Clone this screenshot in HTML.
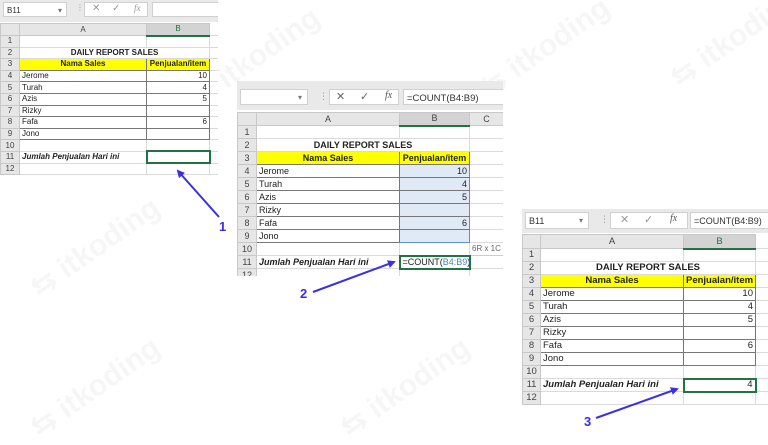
<!DOCTYPE html>
<html><head><meta charset="utf-8"><style>
*{margin:0;padding:0;box-sizing:border-box}
body{width:768px;height:432px;background:#fff;position:relative;overflow:hidden;font-family:"Liberation Sans","DejaVu Sans",sans-serif;color:#222}
.p{position:absolute;background:#fff;overflow:hidden}
.fb{position:absolute;left:0;right:0;top:0;background:#e9e9e9}
.nb,.fx{position:absolute;background:#fff;border:1px solid #d0d0d0;color:#333;white-space:nowrap}
.ic{position:absolute;color:#999}
table{position:absolute;border-collapse:collapse;table-layout:fixed}
td{border:1px solid #dadada;padding:0 2px;white-space:nowrap;overflow:hidden;line-height:1}
td.h{background:#e6e6e6;color:#444;text-align:center;border-color:#c8c8c8}
td.hs{background:#d3d3d3;color:#217346;border-bottom:2px solid #217346}
td.r{text-align:right}
td.d{border:1px solid #777}
td.y{background:#ffff00;font-weight:bold;text-align:center;border:1px solid #777}
td.t{font-weight:bold;text-align:center}
td.i{font-weight:bold;font-style:italic}
td.sel{border:2px solid #217346}
.wm{position:absolute;color:rgba(0,0,0,0.035);font-weight:bold;transform:rotate(-35deg);font-size:30px;white-space:nowrap}
</style></head><body>

<div class="wm" style="left:180px;top:40px">⇆ itkoding</div>
<div class="wm" style="left:470px;top:30px">⇆ itkoding</div>
<div class="wm" style="left:660px;top:20px">⇆ itkoding</div>
<div class="wm" style="left:20px;top:230px">⇆ itkoding</div>
<div class="wm" style="left:20px;top:370px">⇆ itkoding</div>
<div class="wm" style="left:330px;top:370px">⇆ itkoding</div>

<!-- Panel 1 -->
<div class="p" style="left:0;top:0;width:218px;height:176px">
 <div class="fb" style="height:22px"></div>
 <div class="nb" style="left:3px;top:2px;width:64px;height:15px;font-size:8px;padding:3px 3px">B11<span style="position:absolute;right:4px;color:#777">▾</span></div>
 <div class="ic" style="left:76px;top:3px;font-size:8px">⋮</div>
 <div class="nb" style="left:84px;top:2px;width:64px;height:15px"></div>
 <div class="ic" style="left:92px;top:3px;font-size:10px">✕</div>
 <div class="ic" style="left:112px;top:3px;font-size:10px">✓</div>
 <div class="ic" style="left:134px;top:3px;font-size:9px;font-style:italic;font-family:'Liberation Serif',serif">fx</div>
 <div class="fx" style="left:152px;top:2px;width:70px;height:15px"></div>
 <table style="left:0;top:23px;font-size:8px;width:229px">
  <colgroup><col style="width:19px"><col style="width:127px"><col style="width:63px"><col style="width:20px"></colgroup>
  <tr style="height:12px"><td class="h"></td><td class="h">A</td><td class="h hs">B</td><td style="border:none"></td></tr>
  <tr style="height:11.6px"><td class="h">1</td><td></td><td></td><td></td></tr>
  <tr style="height:11.6px"><td class="h">2</td><td colspan="2" class="t">DAILY REPORT SALES</td><td></td></tr>
  <tr style="height:11.6px"><td class="h">3</td><td class="y">Nama Sales</td><td class="y">Penjualan/item</td><td></td></tr>
  <tr style="height:11.6px"><td class="h">4</td><td class="d">Jerome</td><td class="d r">10</td><td></td></tr>
  <tr style="height:11.6px"><td class="h">5</td><td class="d">Turah</td><td class="d r">4</td><td></td></tr>
  <tr style="height:11.6px"><td class="h">6</td><td class="d">Azis</td><td class="d r">5</td><td></td></tr>
  <tr style="height:11.6px"><td class="h">7</td><td class="d">Rizky</td><td class="d"></td><td></td></tr>
  <tr style="height:11.6px"><td class="h">8</td><td class="d">Fafa</td><td class="d r">6</td><td></td></tr>
  <tr style="height:11.6px"><td class="h">9</td><td class="d">Jono</td><td class="d"></td><td></td></tr>
  <tr style="height:11.6px"><td class="h">10</td><td></td><td></td><td></td></tr>
  <tr style="height:11.6px"><td class="h">11</td><td class="i">Jumlah Penjualan Hari ini</td><td class="sel"></td><td></td></tr>
  <tr style="height:11.6px"><td class="h">12</td><td></td><td></td><td></td></tr>
 </table>
</div>

<!-- Panel 2 -->
<div class="p" style="left:237px;top:81px;width:266px;height:195px">
 <div class="fb" style="height:29px"></div>
 <div class="nb" style="left:3px;top:8px;width:68px;height:16px"><span style="position:absolute;right:5px;top:3px;font-size:8px;color:#777">▾</span></div>
 <div class="ic" style="left:82px;top:10px;font-size:9px">⋮</div>
 <div class="nb" style="left:92px;top:8px;width:70px;height:16px"></div>
 <div class="ic" style="left:99px;top:9px;font-size:11px;color:#666">✕</div>
 <div class="ic" style="left:123px;top:9px;font-size:11px;color:#666">✓</div>
 <div class="ic" style="left:148px;top:9px;font-size:10px;font-style:italic;font-family:'Liberation Serif',serif;color:#555">fx</div>
 <div class="fx" style="left:166px;top:8px;width:110px;height:16px;font-size:9.5px;padding:3px 3px">=COUNT(B4:B9)</div>
 <table style="left:0;top:31px;font-size:9px;width:266px">
  <colgroup><col style="width:19px"><col style="width:143px"><col style="width:70px"><col style="width:34px"></colgroup>
  <tr style="height:13px"><td class="h"></td><td class="h">A</td><td class="h hs" style="background:#d3d3d3;color:#444;border-bottom-color:#217346">B</td><td class="h">C</td></tr>
  <tr style="height:13px"><td class="h">1</td><td></td><td></td><td></td></tr>
  <tr style="height:13px"><td class="h">2</td><td colspan="2" class="t">DAILY REPORT SALES</td><td></td></tr>
  <tr style="height:13px"><td class="h">3</td><td class="y">Nama Sales</td><td class="y">Penjualan/item</td><td></td></tr>
  <tr style="height:13px"><td class="h">4</td><td class="d">Jerome</td><td class="d r" style="background:#dfeaf6;border-left:1px solid #5b8fd0;border-right:1px solid #5b8fd0">10</td><td></td></tr>
  <tr style="height:13px"><td class="h">5</td><td class="d">Turah</td><td class="d r" style="background:#dfeaf6;border-left:1px solid #5b8fd0;border-right:1px solid #5b8fd0">4</td><td></td></tr>
  <tr style="height:13px"><td class="h">6</td><td class="d">Azis</td><td class="d r" style="background:#dfeaf6;border-left:1px solid #5b8fd0;border-right:1px solid #5b8fd0">5</td><td></td></tr>
  <tr style="height:13px"><td class="h">7</td><td class="d">Rizky</td><td class="d" style="background:#dfeaf6;border-left:1px solid #5b8fd0;border-right:1px solid #5b8fd0"></td><td></td></tr>
  <tr style="height:13px"><td class="h">8</td><td class="d">Fafa</td><td class="d r" style="background:#dfeaf6;border-left:1px solid #5b8fd0;border-right:1px solid #5b8fd0">6</td><td></td></tr>
  <tr style="height:13px"><td class="h">9</td><td class="d">Jono</td><td class="d" style="background:#dfeaf6;border:1px solid #5b8fd0;border-top-color:#777"></td><td></td></tr>
  <tr style="height:13px"><td class="h">10</td><td></td><td></td><td style="font-size:8px;color:#666;border:1px solid #ccc">6R x 1C</td></tr>
  <tr style="height:13px"><td class="h">11</td><td class="i">Jumlah Penjualan Hari ini</td><td class="sel">=COUNT(<span style="color:#4a7fc8">B4:B9</span>)</td><td></td></tr>
  <tr style="height:13px"><td class="h">12</td><td></td><td></td><td></td></tr>
 </table>
</div>

<!-- Panel 3 -->
<div class="p" style="left:522px;top:209px;width:246px;height:197px">
 <div class="fb" style="height:24px"></div>
 <div class="nb" style="left:3px;top:3px;width:64px;height:17px;font-size:9px;padding:3px 3px">B11<span style="position:absolute;right:5px;color:#777;font-size:8px">▾</span></div>
 <div class="ic" style="left:78px;top:5px;font-size:9px">⋮</div>
 <div class="nb" style="left:88px;top:3px;width:78px;height:17px"></div>
 <div class="ic" style="left:98px;top:4px;font-size:11px">✕</div>
 <div class="ic" style="left:122px;top:4px;font-size:11px">✓</div>
 <div class="ic" style="left:148px;top:4px;font-size:10px;font-style:italic;font-family:'Liberation Serif',serif;color:#555">fx</div>
 <div class="fx" style="left:168px;top:3px;width:80px;height:17px;font-size:9px;padding:3px 3px">=COUNT(B4:B9)</div>
 <table style="left:0;top:25px;font-size:9.5px;width:246px">
  <colgroup><col style="width:18px"><col style="width:143px"><col style="width:72px"><col style="width:13px"></colgroup>
  <tr style="height:14px"><td class="h"></td><td class="h">A</td><td class="h hs">B</td><td style="border:none"></td></tr>
  <tr style="height:13px"><td class="h">1</td><td></td><td></td><td></td></tr>
  <tr style="height:13px"><td class="h">2</td><td colspan="2" class="t">DAILY REPORT SALES</td><td></td></tr>
  <tr style="height:13px"><td class="h">3</td><td class="y">Nama Sales</td><td class="y">Penjualan/item</td><td></td></tr>
  <tr style="height:13px"><td class="h">4</td><td class="d">Jerome</td><td class="d r">10</td><td></td></tr>
  <tr style="height:13px"><td class="h">5</td><td class="d">Turah</td><td class="d r">4</td><td></td></tr>
  <tr style="height:13px"><td class="h">6</td><td class="d">Azis</td><td class="d r">5</td><td></td></tr>
  <tr style="height:13px"><td class="h">7</td><td class="d">Rizky</td><td class="d"></td><td></td></tr>
  <tr style="height:13px"><td class="h">8</td><td class="d">Fafa</td><td class="d r">6</td><td></td></tr>
  <tr style="height:13px"><td class="h">9</td><td class="d">Jono</td><td class="d"></td><td></td></tr>
  <tr style="height:13px"><td class="h">10</td><td></td><td></td><td></td></tr>
  <tr style="height:13px"><td class="h">11</td><td class="i">Jumlah Penjualan Hari ini</td><td class="sel r">4</td><td></td></tr>
  <tr style="height:13px"><td class="h">12</td><td></td><td></td><td></td></tr>
 </table>
</div>

<svg width="768" height="432" style="position:absolute;left:0;top:0">
 <defs><marker id="a" markerWidth="8" markerHeight="8" refX="6" refY="4" orient="auto" markerUnits="userSpaceOnUse"><path d="M0,0 L8,4 L0,8 Z" fill="#3b2fe0"/></marker></defs>
 <g stroke="#3b2fe0" stroke-width="2" fill="none" marker-end="url(#a)">
  <line x1="219" y1="217" x2="178" y2="171"/>
  <line x1="313" y1="292" x2="394" y2="262"/>
  <line x1="596" y1="418" x2="677" y2="389"/>
 </g>
 <g fill="#3b2fe0" font-family="Liberation Sans, sans-serif" font-weight="bold" font-size="13">
  <text x="219" y="231">1</text>
  <text x="300" y="298">2</text>
  <text x="584" y="426">3</text>
 </g>
</svg>
</body></html>
